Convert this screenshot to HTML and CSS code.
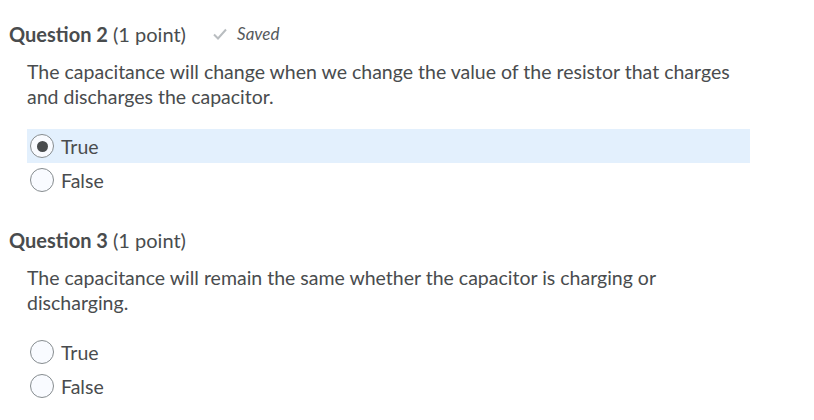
FILE: index.html
```html
<!DOCTYPE html>
<html>
<head>
    <meta charset="UTF-8">
    <title>Quiz</title>
    <link rel="stylesheet" href="styles.css">
</head>
<body>
    <div class="quiz">
        <div class="question">
            <h2 class="q-title">
                <span class="q-name">Question 2</span> (1 point)
                <span class="saved"><svg width="16" height="14" viewBox="0 0 16 14"><path d="M2 7.5 L6 11.5 L14 2.5" fill="none" stroke="#b9bdc0" stroke-width="2"/></svg>Saved</span>
            </h2>
            <p class="q-text">The capacitance will change when we change the value of the resistor that charges and discharges the capacitor.</p>
            <div class="choices">
                <label class="choice selected"><span class="radio checked"></span>True</label>
                <label class="choice"><span class="radio"></span>False</label>
            </div>
        </div>
        <div class="question">
            <h2 class="q-title"><span class="q-name">Question 3</span> (1 point)</h2>
            <p class="q-text">The capacitance will remain the same whether the capacitor is charging or discharging.</p>
            <div class="choices">
                <label class="choice"><span class="radio"></span>True</label>
                <label class="choice"><span class="radio"></span>False</label>
            </div>
        </div>
    </div>
</body>
</html>
```

FILE: styles.css
```css
* {
    margin: 0;
    padding: 0;
    box-sizing: border-box;
}

body {
    font-family: Lato, 'Open Sans', sans-serif;
    background-color: #ffffff;
    color: #494c4e;
    padding: 21px 9px 0;
}

.quiz {
    width: 741px;
}

.question {
    margin-bottom: 30px;
}

.question:last-child {
    margin-bottom: 0;
}

.q-title {
    font-size: 20px;
    font-weight: 400;
    line-height: 26px;
}

.q-name {
    font-weight: 700;
}

.saved {
    display: inline-flex;
    align-items: center;
    gap: 9px;
    margin-left: 21px;
    font-size: 17px;
    font-style: italic;
    color: #565a5c;
    vertical-align: 1px;
}

.q-text {
    margin: 12px 0 0 18px;
    font-size: 19.5px;
    line-height: 25px;
    width: 723px;
}

.choices {
    margin: 20px 0 0 18px;
}

.choice {
    display: flex;
    align-items: center;
    gap: 7px;
    height: 34px;
    padding-left: 3px;
    font-size: 19.5px;
}

.choice.selected {
    background-color: #e3f0fd;
}

.radio {
    width: 24px;
    height: 24px;
    border: 1px solid #868c8f;
    border-radius: 50%;
    background-color: #f9fbff;
    display: flex;
    align-items: center;
    justify-content: center;
}

.radio.checked::after {
    content: "";
    width: 11px;
    height: 11px;
    border-radius: 50%;
    background-color: #494c4e;
}
```
